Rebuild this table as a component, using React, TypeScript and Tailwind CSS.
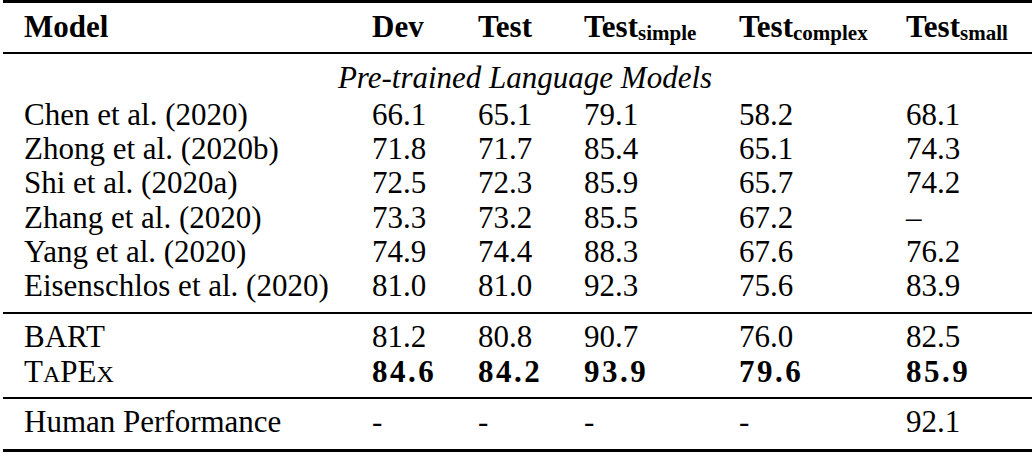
const COLS = 'grid grid-cols-[348px_106px_106px_155px_167px_1fr]'

type Row = { model: React.ReactNode; vals: string[] }

const pretrained: Row[] = [
  { model: 'Chen et al. (2020)', vals: ['66.1', '65.1', '79.1', '58.2', '68.1'] },
  { model: 'Zhong et al. (2020b)', vals: ['71.8', '71.7', '85.4', '65.1', '74.3'] },
  { model: 'Shi et al. (2020a)', vals: ['72.5', '72.3', '85.9', '65.7', '74.2'] },
  { model: 'Zhang et al. (2020)', vals: ['73.3', '73.2', '85.5', '67.2', '–'] },
  { model: 'Yang et al. (2020)', vals: ['74.9', '74.4', '88.3', '67.6', '76.2'] },
  { model: 'Eisenschlos et al. (2020)', vals: ['81.0', '81.0', '92.3', '75.6', '83.9'] },
]

function Sub({ children }: { children: React.ReactNode }) {
  return <span className="relative top-[3.5px] text-[21px]">{children}</span>
}

function TableRow({ row, bold = false, h = 'h-[34.4px]' }: { row: Row; bold?: boolean; h?: string }) {
  return (
    <div className={`${COLS} ${h}`}>
      <div>{row.model}</div>
      {row.vals.map((v, i) => (
        <div key={i} className={bold ? 'font-bold tracking-[2.5px]' : ''}>
          {v}
        </div>
      ))}
    </div>
  )
}

// small-caps by hand: T·A·PE·X
function Tapex() {
  return (
    <span>
      T<span className="text-[24px]">A</span>PE<span className="text-[24px]">X</span>
    </span>
  )
}

export default function App() {
  return (
    <div className="w-[1036px] h-[454px] bg-white text-black">
      <div className="ml-[3px] w-[1029px] font-['Liberation_Serif','Times_New_Roman',serif] text-[31px] leading-[34px]">
        {/* header */}
        <div className="border-t-[3px] border-black pl-[21px] pt-[6.5px] pb-[8.5px]">
          <div className={`${COLS} h-[34px] font-bold`}>
            <div>Model</div>
            <div>Dev</div>
            <div>Test</div>
            <div className="whitespace-nowrap">
              Test<Sub>simple</Sub>
            </div>
            <div className="whitespace-nowrap">
              Test<Sub>complex</Sub>
            </div>
            <div className="whitespace-nowrap">
              Test<Sub>small</Sub>
            </div>
          </div>
        </div>

        {/* pre-trained LMs */}
        <div className="border-t-2 border-black pl-[21px] pt-[6.5px] pb-[8px]">
          <div className="h-[37px] text-center italic pr-[6px]">Pre-trained Language Models</div>
          {pretrained.map((r, i) => (
            <TableRow key={i} row={r} />
          ))}
        </div>

        {/* ours */}
        <div className="border-t-2 border-black pl-[21px] pt-[6.5px] pb-[7px]">
          <TableRow row={{ model: 'BART', vals: ['81.2', '80.8', '90.7', '76.0', '82.5'] }} h="h-[35px]" />
          <TableRow row={{ model: <Tapex />, vals: ['84.6', '84.2', '93.9', '79.6', '85.9'] }} bold />
        </div>

        {/* human */}
        <div className="border-t-2 border-b-[3px] border-black pl-[21px] pt-[6.5px] pb-[9px]">
          <TableRow row={{ model: 'Human Performance', vals: ['-', '-', '-', '-', '92.1'] }} />
        </div>
      </div>
    </div>
  )
}
